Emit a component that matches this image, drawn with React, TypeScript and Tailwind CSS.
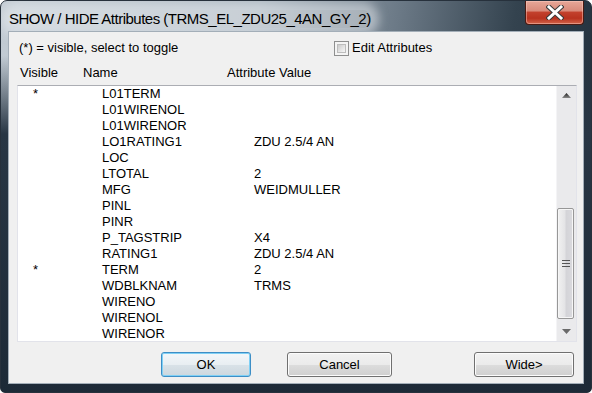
import React from 'react'

type Row = { vis?: boolean; name: string; value?: string }

const ROWS: Row[] = [
  { vis: true, name: 'L01TERM' },
  { name: 'L01WIRENOL' },
  { name: 'L01WIRENOR' },
  { name: 'LO1RATING1', value: 'ZDU 2.5/4 AN' },
  { name: 'LOC' },
  { name: 'LTOTAL', value: '2' },
  { name: 'MFG', value: 'WEIDMULLER' },
  { name: 'PINL' },
  { name: 'PINR' },
  { name: 'P_TAGSTRIP', value: 'X4' },
  { name: 'RATING1', value: 'ZDU 2.5/4 AN' },
  { vis: true, name: 'TERM', value: '2' },
  { name: 'WDBLKNAM', value: 'TRMS' },
  { name: 'WIRENO' },
  { name: 'WIRENOL' },
  { name: 'WIRENOR' },
]

const BTN =
  'h-[25px] rounded-[3px] border text-[13px] flex items-center justify-center text-black'
const BTN_NORMAL =
  'border-[#707070] bg-[linear-gradient(to_bottom,#f2f2f2_0%,#ebebeb_50%,#dddddd_50%,#cfcfcf_100%)] shadow-[inset_0_0_0_1px_#fcfcfc]'
const BTN_DEFAULT =
  'border-[#3d8ec6] bg-[linear-gradient(to_bottom,#f3f7fa_0%,#e8eef2_50%,#d9e2e8_50%,#ccd7de_100%)] shadow-[inset_0_0_0_1px_#7fd0f5]'

function Arrow({ down }: { down?: boolean }) {
  return (
    <svg width="9" height="5" viewBox="0 0 9 5" className={down ? 'rotate-180' : ''}>
      <defs>
        <linearGradient id={down ? 'ad' : 'au'} x1="0" y1="0" x2="0" y2="1">
          <stop offset="0" stopColor={down ? '#6a6a6a' : '#1e1e1e'} />
          <stop offset="1" stopColor={down ? '#6a6a6a' : '#8a8a8a'} />
        </linearGradient>
      </defs>
      <path d="M4.5 0 L9 5 L0 5 Z" fill={`url(#${down ? 'ad' : 'au'})`} />
    </svg>
  )
}

function ScrollBar() {
  return (
    <div className="w-[20px] h-full flex flex-col bg-[#eaeaec] border-l border-[#f4f4f6]">
      <div className="h-[17px] flex items-center justify-center pt-[2px]">
        <Arrow />
      </div>
      {/* thumb sits 105px down the track */}
      <div className="flex-1 pt-[105px] pr-[2px]">
        <div className="h-[111px] rounded-[2px] border border-[#979797] bg-[linear-gradient(to_right,#f1f1f1_0%,#e4e4e6_45%,#d4d4d8_55%,#dadade_100%)] shadow-[inset_0_0_0_1px_#f6f6f6] flex items-center justify-center">
          <div className="flex flex-col gap-[2px] w-[8px]">
            <div className="h-[1px] bg-[#555]" />
            <div className="h-[1px] bg-[#555]" />
            <div className="h-[1px] bg-[#555]" />
          </div>
        </div>
      </div>
      <div className="h-[17px] flex items-center justify-center pb-[2px]">
        <Arrow down />
      </div>
    </div>
  )
}

export default function App() {
  return (
    <div className="w-[592px] h-[393px] font-['Liberation_Sans',Arial,sans-serif]">
      <div className="w-full h-full flex flex-col rounded-t-[7px] rounded-b-[5px] border border-[#27313c] overflow-hidden bg-[linear-gradient(to_bottom,transparent_0%,transparent_14%,#283644_34%,#1d2a37_100%),linear-gradient(98deg,#c3ccd4_0%,#aab5bf_40%,#6b7986_62%,#34434f_80%,#1d2b38_100%)]">
        {/* title bar */}
        <div className="h-[30px] flex items-start shrink-0">
          <div className="pl-[8px] pt-[9px]">
            <span className="block rounded-[10px] bg-white/35 shadow-[0_0_10px_8px_rgba(235,240,244,0.5)] text-[15px] leading-[18px] tracking-[-0.5px] text-black whitespace-nowrap">
              SHOW / HIDE Attributes (TRMS_EL_ZDU25_4AN_GY_2)
            </span>
          </div>
          <div className="ml-auto mr-[7px] w-[59px] h-[24px] rounded-b-[4px] border border-t-0 border-[#4b1a12] bg-[linear-gradient(to_bottom,#e7a798_0%,#d98b7b_42%,#c2402c_50%,#b8321f_75%,#d2644a_100%)] shadow-[inset_0_0_0_1px_rgba(255,210,200,0.45)] flex items-center justify-center">
            <svg width="18" height="15" viewBox="0 0 18 15">
              <path d="M3 2 L15 13 M15 2 L3 13" stroke="#3a3a3a" strokeWidth="5" strokeLinecap="square" fill="none" />
              <path d="M3 2 L15 13 M15 2 L3 13" stroke="#ffffff" strokeWidth="3" strokeLinecap="square" fill="none" />
            </svg>
          </div>
        </div>

        {/* client area */}
        <div className="mx-[7px] mb-[8px] flex-1 border border-[#a3aeb8] bg-[#f0f0f0] flex flex-col text-black">
          <div className="mt-[8px] h-[16px] flex items-center pl-[10px] text-[13px]">
            <span className="w-[315px] whitespace-nowrap">(*) = visible, select to toggle</span>
            <span className="w-[15px] h-[15px] border border-[#8e8f8f] bg-[#f4f4f4] p-[2px]">
              <span className="block w-full h-full border border-[#bdbdbd] bg-[linear-gradient(135deg,#cbcbcb_0%,#e6e6e6_60%,#f6f6f6_100%)]" />
            </span>
            <span className="ml-[3px] whitespace-nowrap">Edit Attributes</span>
          </div>

          <div className="mt-[9px] h-[16px] flex items-center pl-[11px] text-[13px]">
            <span className="w-[63px]">Visible</span>
            <span className="w-[144px]">Name</span>
            <span>Attribute Value</span>
          </div>

          <div className="mt-[4px] ml-[8px] w-[560px] h-[257px] border border-[#e2e3ea] border-t-[#abadb3] bg-white flex">
            <div className="flex-1 pl-[15px] text-[13px]">
              {ROWS.map(r => (
                <div key={r.name} className="h-[16px] leading-[16px] flex whitespace-nowrap">
                  <span className="w-[69px]">{r.vis ? '*' : ''}</span>
                  <span className="w-[152px]">{r.name}</span>
                  <span>{r.value ?? ''}</span>
                </div>
              ))}
            </div>
            <ScrollBar />
          </div>

          <div className="mt-[10px] flex pl-[152px]">
            <button className={`${BTN} ${BTN_DEFAULT} w-[90px]`}>OK</button>
            <button className={`${BTN} ${BTN_NORMAL} w-[105px] ml-[36px]`}>Cancel</button>
            <button className={`${BTN} ${BTN_NORMAL} w-[100px] ml-[82px]`}>Wide&gt;</button>
          </div>
        </div>
      </div>
    </div>
  )
}
